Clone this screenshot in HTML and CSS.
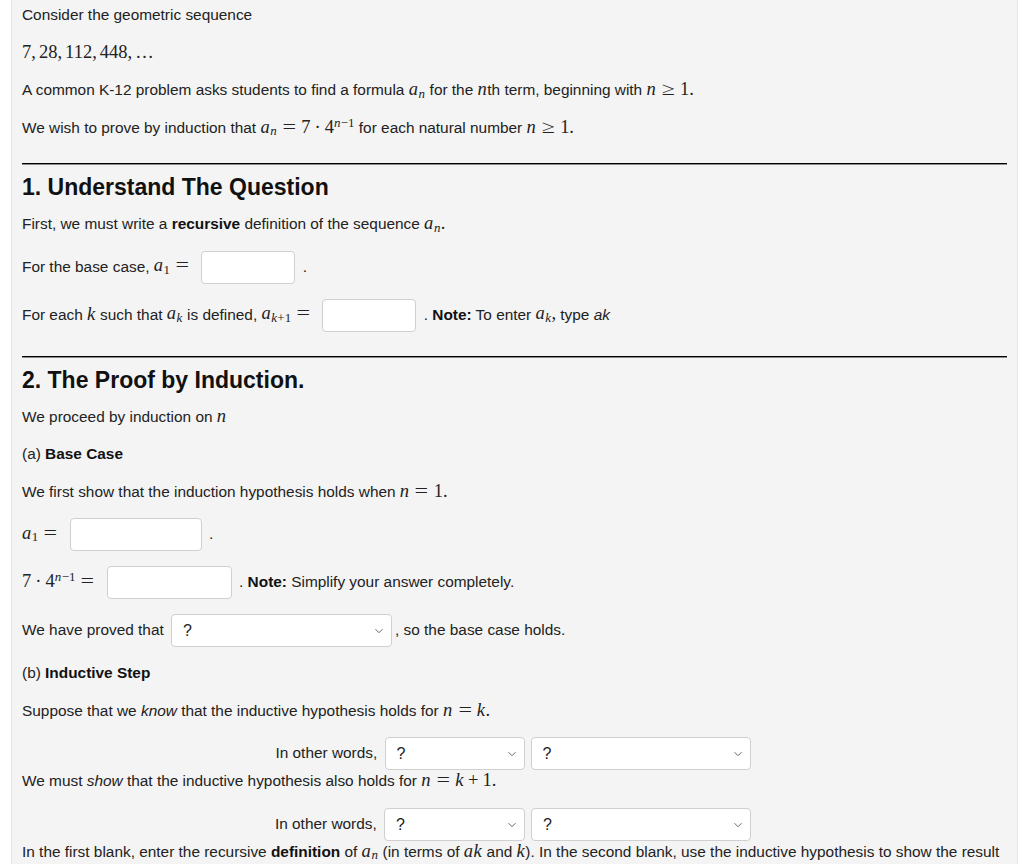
FILE: index.html
```html
<!DOCTYPE html>
<html lang="en">
<head>
<meta charset="utf-8">
<title>Induction proof</title>
<link rel="stylesheet" href="styles.css">
</head>
<body>
<div class="page">
  <p>Consider the geometric sequence</p>
  <p><span class="m">7<span class="pc">,</span>28<span class="pc">,</span>112<span class="pc">,</span>448<span class="pc">,</span><span class="dots">…</span></span></p>
  <p>A common K-12 problem asks students to find a formula <span class="m"><span class="i">a</span><span class="sb i">n</span></span> for the <span class="m i">n</span>th term, beginning with <span class="m"><span class="i">n</span><span class="rel">≥</span>1.</span></p>
  <p>We wish to prove by induction that <span class="m"><span class="i">a</span><span class="sb i">n</span><span class="rel">=</span>7<span class="bin">·</span>4<span class="sp"><span class="i">n</span>&#8722;1</span></span> for each natural number <span class="m"><span class="i">n</span><span class="rel">≥</span>1.</span></p>

  <hr class="rule">
  <h2>1. Understand The Question</h2>
  <p>First, we must write a <b>recursive</b> definition of the sequence <span class="m"><span class="i">a</span><span class="sb i">n</span>.</span></p>
  <p>For the base case, <span class="m"><span class="i">a</span><span class="sb">1</span><span class="rel">=</span></span> <input class="field w94" type="text" aria-label="a1"> .</p>
  <p>For each <span class="m i">k</span> such that <span class="m"><span class="i">a</span><span class="sb i">k</span></span> is defined, <span class="m"><span class="i">a</span><span class="sb"><span class="i">k</span>+1</span><span class="rel">=</span></span> <input class="field w94" type="text" aria-label="a k plus 1"> . <b>Note:</b> To enter <span class="m"><span class="i">a</span><span class="sb i">k</span>,</span> type <i>ak</i></p>

  <hr class="rule">
  <h2>2. The Proof by Induction.</h2>
  <p>We proceed by induction on <span class="m i">n</span></p>
  <p>(a) <b>Base Case</b></p>
  <p>We first show that the induction hypothesis holds when <span class="m"><span class="i">n</span><span class="rel">=</span>1.</span></p>
  <p><span class="m"><span class="i">a</span><span class="sb">1</span><span class="rel">=</span></span> <input class="field w132" type="text" aria-label="a1 value"> .</p>
  <p><span class="m">7<span class="bin">·</span>4<span class="sp"><span class="i">n</span>&#8722;1</span><span class="rel">=</span></span> <input class="field w125" type="text" aria-label="formula value"> . <b>Note:</b> Simplify your answer completely.</p>
  <p>We have proved that <span class="sel w221"><select aria-label="base case"><option>?</option></select><svg class="chev" width="10" height="6" viewBox="0 0 10 6"><path d="M1.5 1.2l3.5 3.5 3.5-3.5" fill="none" stroke="#666" stroke-width="1"/></svg></span>, so the base case holds.</p>
  <p>(b) <b>Inductive Step</b></p>
  <p>Suppose that we <i>know</i> that the inductive hypothesis holds for <span class="m"><span class="i">n</span><span class="rel">=</span><span class="i">k</span>.</span></p>
  <div class="row">In other words, <span class="sel w140"><select aria-label="hypothesis left"><option>?</option></select><svg class="chev" width="10" height="6" viewBox="0 0 10 6"><path d="M1.5 1.2l3.5 3.5 3.5-3.5" fill="none" stroke="#666" stroke-width="1"/></svg></span><span class="sel w220"><select aria-label="hypothesis right"><option>?</option></select><svg class="chev" width="10" height="6" viewBox="0 0 10 6"><path d="M1.5 1.2l3.5 3.5 3.5-3.5" fill="none" stroke="#666" stroke-width="1"/></svg></span></div>
  <div class="plain">We must <i>show</i> that the inductive hypothesis also holds for <span class="m"><span class="i">n</span><span class="rel">=</span><span class="i">k</span><span class="bin">+</span>1.</span></div>
  <div class="row">In other words, <span class="sel w141"><select aria-label="goal left"><option>?</option></select><svg class="chev" width="10" height="6" viewBox="0 0 10 6"><path d="M1.5 1.2l3.5 3.5 3.5-3.5" fill="none" stroke="#666" stroke-width="1"/></svg></span><span class="sel w220"><select aria-label="goal right"><option>?</option></select><svg class="chev" width="10" height="6" viewBox="0 0 10 6"><path d="M1.5 1.2l3.5 3.5 3.5-3.5" fill="none" stroke="#666" stroke-width="1"/></svg></span></div>
  <div class="plain">In the first blank, enter the recursive <b>definition</b> of <span class="m"><span class="i">a</span><span class="sb i">n</span></span> (in terms of <span class="m i">ak</span> and <span class="m i">k</span>). In the second blank, use the inductive hypothesis to show the result</div>
</div>
</body>
</html>
```
FILE: styles.css
```css
html, body {
  margin: 0;
  padding: 0;
  background: #ffffff;
}

body {
  font-family: "Liberation Sans", Arial, sans-serif;
  font-size: 15.4px;
  color: #222222;
}

.page {
  margin: 0 6px 0 11px;
  padding: 4px 10px 40px;
  background: #f4f4f4;
  border-left: 1px solid #e6e6e6;
  border-right: 1px solid #e6e6e6;
  min-height: 900px;
}

p {
  margin: 15px 0;
  line-height: 22.5px;
}

.page > p:first-child {
  margin-top: 0;
}

.rule {
  border: 0;
  height: 1px;
  background: #000000;
  box-shadow: 0 1px 0 #8a8a8a;
  margin: 24px 0 0;
}

h2 {
  font-size: 23px;
  line-height: 22px;
  font-weight: bold;
  color: #111111;
  margin: 12px 0 15px;
}

b {
  color: #111111;
}

/* math */
.m {
  font-family: "Liberation Serif", "DejaVu Serif", serif;
  font-size: 1.2em;
  line-height: 1;
  white-space: nowrap;
}

.i {
  font-style: italic;
  letter-spacing: 0.03em;
}

.sb {
  font-size: 0.7em;
  position: relative;
  top: 0.22em;
}

.sp {
  font-size: 0.7em;
  position: relative;
  top: -0.45em;
}

.rel {
  display: inline-block;
  margin: 0 0.37em;
  transform: scaleX(1.3);
}

.bin {
  margin: 0 0.2222em;
}

.pc {
  margin-right: 0.1667em;
}

.dots {
  letter-spacing: 0.08em;
}

/* form fields */
.field {
  display: inline-block;
  vertical-align: middle;
  box-sizing: border-box;
  height: 33px;
  margin: 0 3px;
  padding: 0 8px;
  border: 1px solid #cfcfcf;
  border-radius: 4px;
  background: #ffffff;
  font: inherit;
}

.w94 { width: 94px; }
.w125 { width: 125px; }
.w132 { width: 132px; }
.w140 { width: 140px; }
.w141 { width: 141px; }
.w220 { width: 220px; }
.w221 { width: 221px; }

.sel {
  display: inline-block;
  position: relative;
  vertical-align: middle;
  height: 33px;
  margin: 0 3px;
}

.sel select {
  appearance: none;
  -webkit-appearance: none;
  box-sizing: border-box;
  width: 100%;
  height: 33px;
  margin: 0;
  padding: 0 24px 0 11px;
  border: 1px solid #cfcfcf;
  border-radius: 4px;
  background: #ffffff;
  color: #222222;
  font-family: "Liberation Sans", Arial, sans-serif;
  font-size: 16px;
}

.chev {
  position: absolute;
  right: 8px;
  top: 14px;
  pointer-events: none;
}

.row {
  text-align: center;
  line-height: 22.5px;
}

.plain {
  line-height: 22.5px;
  margin-bottom: 15px;
}
```
